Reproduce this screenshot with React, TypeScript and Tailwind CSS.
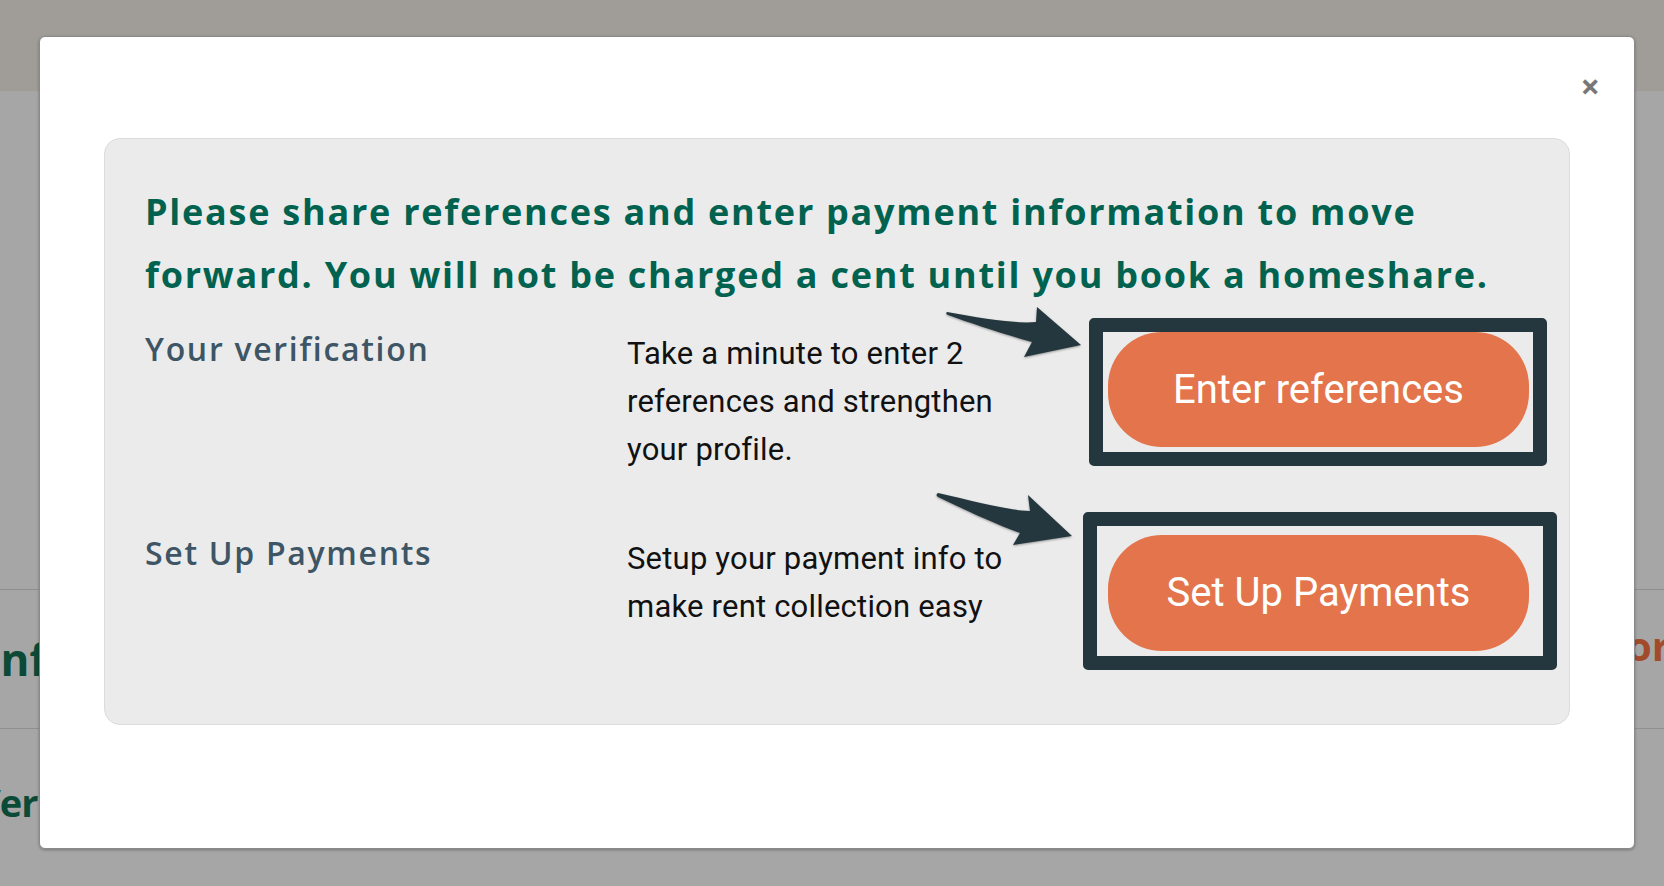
import React from "react"

const heading = "font-['Open_Sans',sans-serif]"
const body = "font-['Roboto',sans-serif]"

function ArrowOne() {
  return (
    <svg
      className="absolute left-[-163px] top-[-32px] drop-shadow-[0_1px_1px_rgba(0,0,0,0.35)]"
      width="145"
      height="62"
      viewBox="0 0 145 62"
    >
      <path
        d="M7 12 C40 18 75 24 96 22 L97 7 L141 45 L84 57 L92 42 C60 33 30 23 8 15 Q5 14 7 12 Z"
        fill="#24373e"
      />
    </svg>
  )
}

function ArrowTwo() {
  return (
    <svg
      className="absolute left-[-167px] top-[-38px] drop-shadow-[0_1px_1px_rgba(0,0,0,0.35)]"
      width="148"
      height="64"
      viewBox="0 0 148 64"
    >
      <path
        d="M8 5 C40 12 75 22 100 23 L98 7 L142 48 L83 57 L90 45 C65 36 35 22 8 9 Q5 7 8 5 Z"
        fill="#24373e"
      />
    </svg>
  )
}

function Pill({ label }: { label: string }) {
  return (
    <button
      className={`${body} flex h-full w-full items-center justify-center rounded-[54px] bg-[#e3744b] text-[40px] text-white`}
    >
      {label}
    </button>
  )
}

export default function App() {
  return (
    <div className="relative h-[886px] overflow-hidden bg-[#a6a6a6]">
      {/* page behind the dialog */}
      <div className="h-[91px] bg-[#a09c98]" />
      <div className="mt-[498px] flex h-[140px] items-center justify-between border-y border-[#8f8f8f]">
        <span className={`${heading} -ml-[14px] text-[44px] font-bold text-[#0c4a38]`}>Info</span>
        <span className={`${heading} -mr-[6px] mb-[26px] text-[40px] font-bold text-[#a14b2b]`}>or</span>
      </div>
      <div className="flex h-[146px] items-center">
        <span className={`${heading} -ml-[24px] text-[38px] font-bold tracking-[-1px] text-[#0c4a38]`}>Verification</span>
      </div>

      {/* dialog */}
      <div className="absolute left-[39px] top-[36px] h-[813px] w-[1596px] rounded-md border border-[#8a8a8a] bg-white px-[64px] pt-[101px] shadow-[0_1px_3px_rgba(0,0,0,0.3)]">
        <button className={`${heading} absolute right-[34px] top-[32px] text-[34px] font-bold leading-none text-[#777]`}>
          ×
        </button>

        <div className="rounded-2xl border border-[#dcdcdc] bg-[#ebebeb] pb-[54px] pl-[40px] pr-[10px] pt-[41px]">
          <h2 className={`${heading} text-[36px] font-bold leading-[63px] tracking-[1.75px] text-[#01634f]`}>
            Please share references and enter payment information to move
            <br />
            forward. You will not be charged a cent until you book a homeshare.
          </h2>

          <div className="mt-[12px] flex h-[148px] items-start">
            <div className={`${heading} w-[482px] shrink-0 pt-[11px] text-[32px] font-semibold leading-[40px] tracking-[1.7px] text-[#3d5564]`}>
              Your verification
            </div>
            <p className={`${body} w-[462px] shrink-0 pt-[12px] text-[31px] leading-[48px] tracking-[0.2px] text-[#111]`}>
              Take a minute to enter 2
              <br />
              references and strengthen
              <br />
              your profile.
            </p>
            <div className="relative h-[148px] w-[458px] shrink-0 rounded-[5px] border-[14px] border-[#24373e] pb-[5px] pl-[5px] pr-[4px]">
              <ArrowOne />
              <Pill label="Enter references" />
            </div>
          </div>

          <div className="mt-[46px] flex items-start">
            <div className={`${heading} w-[482px] shrink-0 pt-[21px] text-[32px] font-semibold leading-[40px] tracking-[1.7px] text-[#3d5564]`}>
              Set Up Payments
            </div>
            <p className={`${body} w-[456px] shrink-0 pt-[23px] text-[31px] leading-[48px] tracking-[0.2px] text-[#111]`}>
              Setup your payment info to
              <br />
              make rent collection easy
            </p>
            <div className="relative h-[158px] w-[474px] shrink-0 rounded-[5px] border-[14px] border-[#24373e] pb-[5px] pl-[11px] pr-[14px] pt-[9px]">
              <ArrowTwo />
              <Pill label="Set Up Payments" />
            </div>
          </div>
        </div>
      </div>
    </div>
  )
}
